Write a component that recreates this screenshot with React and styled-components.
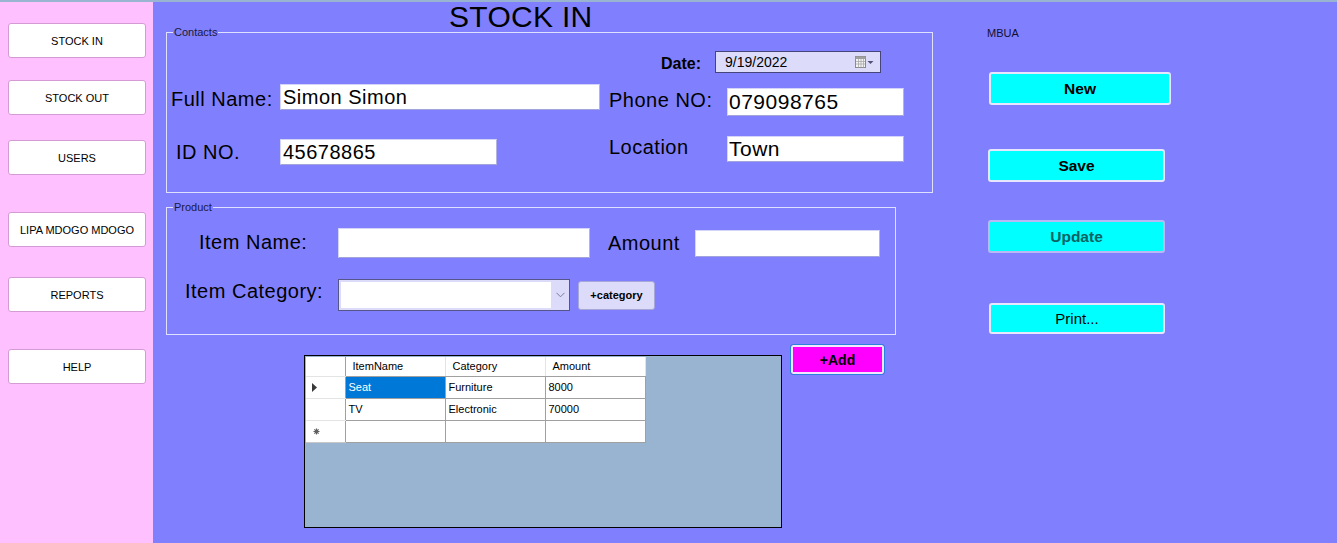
import React from "react";
import styled, { createGlobalStyle } from "styled-components";

const GlobalStyle = createGlobalStyle`
  html, body { margin: 0; padding: 0; }
  body {
    font-family: "Liberation Sans", Arial, sans-serif;
    background: #8080ff;
    overflow: hidden;
    color: #000;
  }
  * { box-sizing: border-box; }
`;

const Page = styled.div`
  width: 1337px;
  height: 543px;
  display: flex;
  flex-direction: column;
`;

const TopStrip = styled.div`
  height: 2px;
  flex: none;
  background: #99b4d1;
`;

const Body = styled.div`
  flex: 1;
  display: flex;
  min-height: 0;
`;

const Sidebar = styled.nav`
  width: 153px;
  flex: none;
  background: #ffc0ff;
  padding-left: 8px;
  display: flex;
  flex-direction: column;
  align-items: flex-start;
`;

const NavButton = styled.button`
  margin-top: ${(p) => p.$mt}px;
  width: 138px;
  height: 35px;
  padding: 0;
  background: #ffffff;
  border: 1px solid #d49ad4;
  border-radius: 3px;
  font: 11px "Liberation Sans", Arial, sans-serif;
  color: #000;
`;

const Main = styled.main`
  flex: 1;
  display: flex;
  background: #8080ff;
  padding-left: 13px;
`;

const LeftCol = styled.section`
  width: 767px;
  flex: none;
  display: flex;
  flex-direction: column;
`;

const Title = styled.h1`
  margin: 0;
  height: 30px;
  line-height: 30px;
  font-size: 30px;
  font-weight: normal;
  letter-spacing: 0.3px;
  padding-left: 283px;
  white-space: nowrap;
`;

const GroupBox = styled.div`
  position: relative;
  width: ${(p) => p.$w}px;
  height: ${(p) => p.$h}px;
  margin-top: ${(p) => p.$mt || 0}px;
  border: 1px solid #e0e0ff;
  flex: none;
`;

const Legend = styled.span`
  position: absolute;
  top: -7px;
  left: 6px;
  padding: 0 1px;
  background: #8080ff;
  font-size: 11px;
  line-height: 13px;
  color: #1a1a3a;
`;

const ContactsBody = styled.div`
  display: flex;
  height: 100%;
`;

const Pane = styled.div`
  width: ${(p) => (p.$w ? `${p.$w}px` : "auto")};
  flex: ${(p) => (p.$w ? "none" : "1")};
  padding-top: ${(p) => p.$pt || 0}px;
  display: flex;
  flex-direction: column;
`;

const FieldRow = styled.div`
  display: flex;
  align-items: center;
  height: ${(p) => p.$h}px;
  margin-top: ${(p) => p.$mt || 0}px;
  flex: none;
`;

const FieldLabel = styled.label`
  flex: none;
  width: ${(p) => p.$w}px;
  padding-left: ${(p) => p.$pl || 0}px;
  padding-top: ${(p) => p.$pt || 0}px;
  padding-bottom: ${(p) => p.$pb || 0}px;
  font-size: ${(p) => (p.$bold ? 16 : 20)}px;
  font-weight: ${(p) => (p.$bold ? "bold" : "normal")};
  letter-spacing: ${(p) => (p.$bold ? 0 : 0.5)}px;
  white-space: nowrap;
`;

const TextBox = styled.div`
  flex: none;
  width: ${(p) => p.$w}px;
  height: ${(p) => p.$h}px;
  margin-left: ${(p) => p.$ml || 0}px;
  background: #ffffff;
  border: 1px solid #d4d4f8;
  border-bottom-color: #a4a4dc;
  border-right-color: #b4b4e4;
  padding-left: ${(p) => (p.$pl === undefined ? 2 : p.$pl)}px;
  font-size: ${(p) => p.$fs || 20}px;
  letter-spacing: 0.5px;
  display: flex;
  align-items: center;
  white-space: nowrap;
`;

const DatePicker = styled.div`
  flex: none;
  width: 166px;
  height: 22px;
  background: #dcdcfa;
  border: 1px solid #45457a;
  padding: 0 6px 0 9px;
  display: flex;
  align-items: center;
  justify-content: space-between;
  font-size: 14px;
`;

const PickerIcon = styled.span`
  display: flex;
  align-items: center;
  gap: 2px;
`;

const ProductBody = styled.div`
  display: flex;
  flex-direction: column;
`;

const Combo = styled.div`
  flex: none;
  width: 232px;
  height: 32px;
  background: #dcdcfa;
  border: 1px solid #55558a;
  padding: 2px 0 2px 2px;
  display: flex;
`;

const ComboField = styled.div`
  flex: 1;
  background: #ffffff;
`;

const ComboArrow = styled.div`
  width: 18px;
  display: flex;
  align-items: center;
  justify-content: center;
`;

const SmallButton = styled.button`
  flex: none;
  margin-left: 8px;
  width: 77px;
  height: 29px;
  padding: 0;
  background: #dcdcfa;
  border: 1px solid #a8a8d8;
  border-radius: 3px;
  font: bold 11px "Liberation Sans", Arial, sans-serif;
  color: #000;
`;

const GridRow = styled.div`
  display: flex;
  align-items: flex-start;
  margin-top: 9px;
`;

const GridPanel = styled.div`
  margin-left: 138px;
  margin-top: 11px;
  width: 478px;
  height: 173px;
  flex: none;
  background: #99b4d1;
  border: 1px solid #000;
  padding: 1px 0 0 1px;
`;

const Table = styled.table`
  border-collapse: collapse;
  table-layout: fixed;
  width: 339px;
  background: #ffffff;
  font: 11px "Liberation Sans", Arial, sans-serif;
`;

const HeadCell = styled.th`
  height: 19px;
  padding: 0 0 0 ${(p) => (p.$corner ? 0 : 7)}px;
  text-align: left;
  font-weight: normal;
  border-right: 1px solid ${(p) => (p.$corner ? "#a0a0a0" : "#e4e4e4")};
  border-bottom: 1px solid ${(p) => (p.$corner ? "#e4e4e4" : "#a0a0a0")};
  background: #ffffff;
`;

const RowHead = styled.td`
  height: 22px;
  padding: 0 0 0 ${(p) => p.$pl || 6}px;
  border-right: 1px solid #a0a0a0;
  border-bottom: 1px solid ${(p) => (p.$last ? "#c8c8c8" : "#e4e4e4")};
  vertical-align: middle;
  line-height: 0;
`;

const Cell = styled.td`
  height: 22px;
  padding: 0 0 0 3px;
  border: 1px solid #a0a0a0;
  background: ${(p) => (p.$selected ? "#0078d7" : "#ffffff")};
  color: ${(p) => (p.$selected ? "#ffffff" : "#000000")};
  white-space: nowrap;
`;

const AddButton = styled.button`
  flex: none;
  margin-left: 8px;
  width: 95px;
  height: 31px;
  padding: 0;
  background: #ff00ff;
  border: 1px solid #2a82e0;
  box-shadow: inset 0 0 0 2px #f0e4ff;
  border-radius: 3px;
  font: bold 14px "Liberation Sans", Arial, sans-serif;
  color: #000;
`;

const RightCol = styled.aside`
  flex: 1;
  padding-left: 54px;
  display: flex;
  flex-direction: column;
  align-items: flex-start;
`;

const Caption = styled.div`
  margin-top: 25px;
  font-size: 11px;
  line-height: 13px;
  color: #101030;
`;

const ActionButton = styled.button`
  margin-top: ${(p) => p.$mt}px;
  margin-left: ${(p) => p.$ml}px;
  width: ${(p) => p.$w}px;
  height: ${(p) => p.$h}px;
  padding: 0;
  background: #00ffff;
  border: 2px solid ${(p) => p.$edge || "#e6e6ff"};
  border-radius: 3px;
  font-family: "Liberation Sans", Arial, sans-serif;
  font-size: ${(p) => (p.$regular ? 15 : 15.5)}px;
  font-weight: ${(p) => (p.$regular ? "normal" : "bold")};
  color: ${(p) => p.$color || "#000"};
`;

const CalendarIcon = () => (
  <svg width="19" height="12" viewBox="0 0 19 12">
    <rect x="0.5" y="0.5" width="10" height="11" fill="#f4f4f4" stroke="#8a8a8a" />
    <rect x="0.5" y="0.5" width="10" height="2.5" fill="#a0a0a0" />
    <path d="M1 5.5H10M1 8H10M3.5 3V11.5M6 3V11.5M8.5 3V11.5" stroke="#a8a8a8" strokeWidth="0.8" />
    <polygon points="12.5,5 18.5,5 15.5,8" fill="#505078" />
  </svg>
);

const Chevron = () => (
  <svg width="9" height="6" viewBox="0 0 9 6">
    <polyline points="0.5,0.8 4.5,4.8 8.5,0.8" fill="none" stroke="#7a7a9a" strokeWidth="1" />
  </svg>
);

const RowArrow = () => (
  <svg width="5" height="9" viewBox="0 0 5 9">
    <polygon points="0,0 5,4.5 0,9" fill="#3a3a3a" />
  </svg>
);

const NewRowMark = () => (
  <svg width="7" height="7" viewBox="0 0 7 7">
    <path d="M3.5 0.5V6.5M0.5 3.5H6.5M1.4 1.4L5.6 5.6M5.6 1.4L1.4 5.6" stroke="#606060" strokeWidth="1.2" />
  </svg>
);

const navItems = [
  { label: "STOCK IN", mt: 21 },
  { label: "STOCK OUT", mt: 22 },
  { label: "USERS", mt: 25 },
  { label: "LIPA MDOGO MDOGO", mt: 37 },
  { label: "REPORTS", mt: 30 },
  { label: "HELP", mt: 37 },
];

const rows = [
  { name: "Seat", category: "Furniture", amount: "8000", current: true },
  { name: "TV", category: "Electronic", amount: "70000" },
];

export default function App() {
  return (
    <>
      <GlobalStyle />
      <Page>
        <TopStrip />
        <Body>
          <Sidebar>
            {navItems.map((n) => (
              <NavButton key={n.label} $mt={n.mt}>
                {n.label}
              </NavButton>
            ))}
          </Sidebar>
          <Main>
            <LeftCol>
              <Title>STOCK IN</Title>
              <GroupBox $w={767} $h={161}>
                <Legend>Contacts</Legend>
                <ContactsBody>
                  <Pane $w={433} $pt={51}>
                    <FieldRow $h={26}>
                      <FieldLabel $w={113} $pl={4} $pt={4}>Full Name:</FieldLabel>
                      <TextBox $w={320} $h={26}>Simon Simon</TextBox>
                    </FieldRow>
                    <FieldRow $h={26} $mt={29}>
                      <FieldLabel $w={113} $pl={9}>ID NO.</FieldLabel>
                      <TextBox $w={217} $h={26}>45678865</TextBox>
                    </FieldRow>
                  </Pane>
                  <Pane>
                    <FieldRow $h={22} $mt={18}>
                      <FieldLabel $w={115} $pl={61} $pt={4} $bold>Date:</FieldLabel>
                      <DatePicker>
                        <span>9/19/2022</span>
                        <PickerIcon>
                          <CalendarIcon />
                        </PickerIcon>
                      </DatePicker>
                    </FieldRow>
                    <FieldRow $h={28} $mt={15}>
                      <FieldLabel $w={127} $pl={9} $pb={3}>Phone NO:</FieldLabel>
                      <TextBox $w={177} $h={28} $fs={21} $pl={1}>079098765</TextBox>
                    </FieldRow>
                    <FieldRow $h={26} $mt={20}>
                      <FieldLabel $w={127} $pl={9} $pb={3}>Location</FieldLabel>
                      <TextBox $w={177} $h={26} $fs={21} $pl={1}>Town</TextBox>
                    </FieldRow>
                  </Pane>
                </ContactsBody>
              </GroupBox>

              <GroupBox $w={730} $h={128} $mt={14}>
                <Legend>Product</Legend>
                <ProductBody>
                  <FieldRow $h={30} $mt={20}>
                    <FieldLabel $w={171} $pl={32} $pb={2}>Item Name:</FieldLabel>
                    <TextBox $w={252} $h={30} />
                    <FieldLabel $w={105} $pl={18}>Amount</FieldLabel>
                    <TextBox $w={185} $h={27} />
                  </FieldRow>
                  <FieldRow $h={32} $mt={21}>
                    <FieldLabel $w={171} $pl={18} $pb={8}>Item Category:</FieldLabel>
                    <Combo>
                      <ComboField />
                      <ComboArrow>
                        <Chevron />
                      </ComboArrow>
                    </Combo>
                    <SmallButton>+category</SmallButton>
                  </FieldRow>
                </ProductBody>
              </GroupBox>

              <GridRow>
                <GridPanel>
                  <Table>
                    <colgroup>
                      <col style={{ width: 39 }} />
                      <col style={{ width: 100 }} />
                      <col style={{ width: 100 }} />
                      <col style={{ width: 100 }} />
                    </colgroup>
                    <thead>
                      <tr>
                        <HeadCell $corner />
                        <HeadCell>ItemName</HeadCell>
                        <HeadCell>Category</HeadCell>
                        <HeadCell>Amount</HeadCell>
                      </tr>
                    </thead>
                    <tbody>
                      {rows.map((r) => (
                        <tr key={r.name}>
                          <RowHead>{r.current ? <RowArrow /> : null}</RowHead>
                          <Cell $selected={r.current}>{r.name}</Cell>
                          <Cell>{r.category}</Cell>
                          <Cell>{r.amount}</Cell>
                        </tr>
                      ))}
                      <tr>
                        <RowHead $pl={7} $last>
                          <NewRowMark />
                        </RowHead>
                        <Cell />
                        <Cell />
                        <Cell />
                      </tr>
                    </tbody>
                  </Table>
                </GridPanel>
                <AddButton>+Add</AddButton>
              </GridRow>
            </LeftCol>

            <RightCol>
              <Caption>MBUA</Caption>
              <ActionButton $mt={32} $ml={2} $w={182} $h={33}>New</ActionButton>
              <ActionButton $mt={44} $ml={1} $w={177} $h={33}>Save</ActionButton>
              <ActionButton $mt={38} $ml={1} $w={177} $h={33} $color="#0a6262" $edge="#b8b8f4">
                Update
              </ActionButton>
              <ActionButton $mt={50} $ml={2} $w={176} $h={31} $regular>
                Print...
              </ActionButton>
            </RightCol>
          </Main>
        </Body>
      </Page>
    </>
  );
}
